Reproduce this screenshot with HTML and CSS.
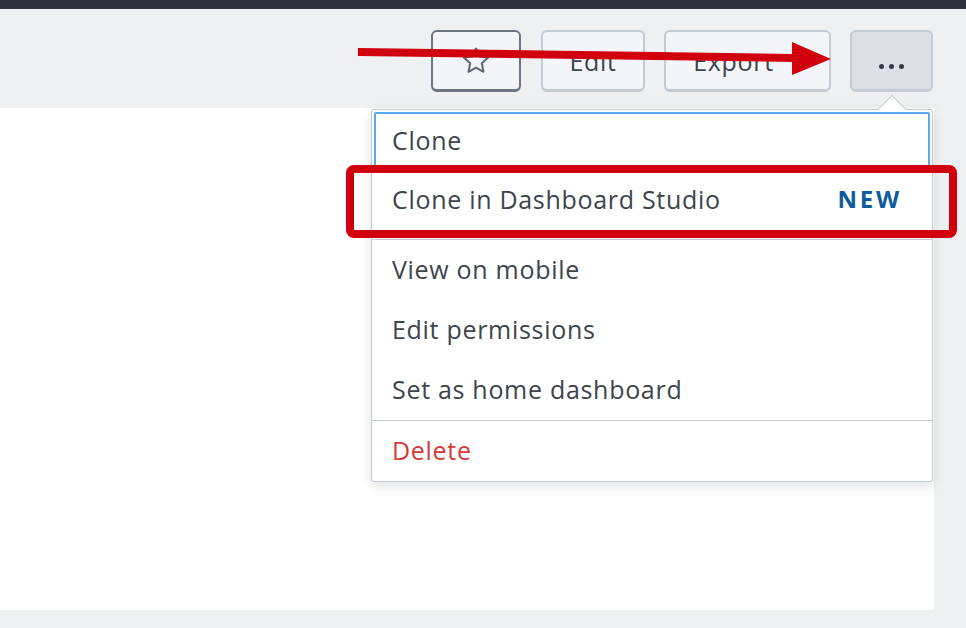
FILE: index.html
```html
<!DOCTYPE html>
<html lang="en">

<head>
    <meta charset="UTF-8">
    <meta name="viewport" content="width=device-width, initial-scale=1.0">
    <title>Dashboard</title>
    <link rel="stylesheet" href="styles.css">
</head>

<body>
    <div class="topbar"></div>

    <div class="header">
        <div class="toolbar">
            <button class="btn btn-star" aria-label="Favorite">
                <svg width="34" height="34" viewBox="0 0 24 24">
                    <path d="M12 3.2l2.6 5.6 6 .7-4.5 4.1 1.2 6L12 16.6l-5.3 3 1.2-6L3.4 9.5l6-.7z" fill="none" stroke="#5c6773" stroke-width="1.4" stroke-linejoin="round"/>
                </svg>
            </button>
            <button class="btn btn-edit">Edit</button>
            <button class="btn btn-export">Export</button>
            <button class="btn btn-more" aria-label="More actions">
                <span class="dot"></span><span class="dot"></span><span class="dot"></span>
            </button>
        </div>
    </div>

    <div class="page">
        <div class="panel"></div>
    </div>

    <!-- More actions menu, opened under the "..." button -->
    <div class="menu">
        <span class="caret"></span>
        <div class="menu-group first">
            <div class="menu-item focused">Clone</div>
            <div class="menu-item">Clone in Dashboard Studio <span class="badge">NEW</span></div>
        </div>
        <div class="menu-group">
            <div class="menu-item">View on mobile</div>
            <div class="menu-item">Edit permissions</div>
            <div class="menu-item">Set as home dashboard</div>
        </div>
        <div class="menu-group">
            <div class="menu-item danger">Delete</div>
        </div>
    </div>

    <!-- red callouts drawn on top -->
    <svg class="callout" width="966" height="628" viewBox="0 0 966 628">
        <polygon points="358,48 358,56 794,62 794,54" fill="#d0000f"/>
        <polygon points="792,42 831,59 792,75" fill="#d0000f"/>
        <rect x="350" y="169" width="603" height="65" rx="4" fill="none" stroke="#d0000f" stroke-width="8"/>
    </svg>
</body>
</html>
```

FILE: styles.css
```css
* {
    box-sizing: border-box;
}

body {
    font-family: 'Open Sans', 'Lato', sans-serif;
    background-color: #eff0f2;
    color: #3c444d;
    margin: 0;
    padding: 0;
    width: 966px;
    height: 628px;
    overflow: hidden;
    position: relative;
}

.topbar {
    height: 9px;
    background-color: #2d333b;
}

.header {
    height: 99px;
}

.toolbar {
    display: flex;
    justify-content: flex-end;
    gap: 19px;
    padding: 21px 33px 0 0;
}

.btn {
    height: 62px;
    font-family: inherit;
    font-size: 25px;
    letter-spacing: 0.7px;
    color: #3c444d;
    background-color: #f3f5f8;
    border: 2px solid #c3cbd4;
    border-bottom-width: 3px;
    border-radius: 6px;
    display: flex;
    align-items: center;
    justify-content: center;
    padding: 0;
}

.btn-star {
    width: 90px;
    border-color: #6b7480;
    margin-right: 1px;
}

.btn-edit {
    width: 104px;
}

.btn-export {
    width: 167px;
    padding-right: 28px;
}

.btn-more {
    width: 83px;
    gap: 5px;
    background-color: #dcdfe6;
    padding-top: 12px;
}

.dot {
    width: 5px;
    height: 5px;
    border-radius: 50%;
    background-color: #343b44;
}

.page {
    width: 934px;
    height: 502px;
    background-color: #fff;
}

.menu {
    position: absolute;
    left: 371px;
    top: 109px;
    width: 562px;
    background-color: #fff;
    border: 1px solid #c3cbd4;
    border-radius: 3px;
    box-shadow: 0 4px 12px rgba(0, 0, 0, 0.12);
}

.caret {
    position: absolute;
    left: 510px;
    top: -11px;
    width: 20px;
    height: 20px;
    background-color: #fff;
    border-top: 1px solid #c3cbd4;
    border-left: 1px solid #c3cbd4;
    transform: rotate(45deg);
}

.menu-group {
    position: relative;
    border-top: 1px solid #c3cbd4;
}

.menu-group.first {
    border-top: none;
    padding-bottom: 9px;
}

.menu-item {
    height: 60px;
    display: flex;
    align-items: center;
    justify-content: space-between;
    padding: 0 32px 3px 20px;
    font-size: 25px;
    letter-spacing: 0.7px;
}

.menu-item.focused {
    margin: 2px 2px 0;
    height: 58px;
    padding-left: 18px;
    box-shadow: inset 0 0 0 2px #5aaaf0;
    border-radius: 2px;
}

.menu-item.danger {
    color: #d63a36;
}

.badge {
    font-size: 24px;
    font-weight: bold;
    letter-spacing: 2.8px;
    color: #0e5c9e;
    margin-right: -2px;
}

.callout {
    position: absolute;
    left: 0;
    top: 0;
    pointer-events: none;
}
```
